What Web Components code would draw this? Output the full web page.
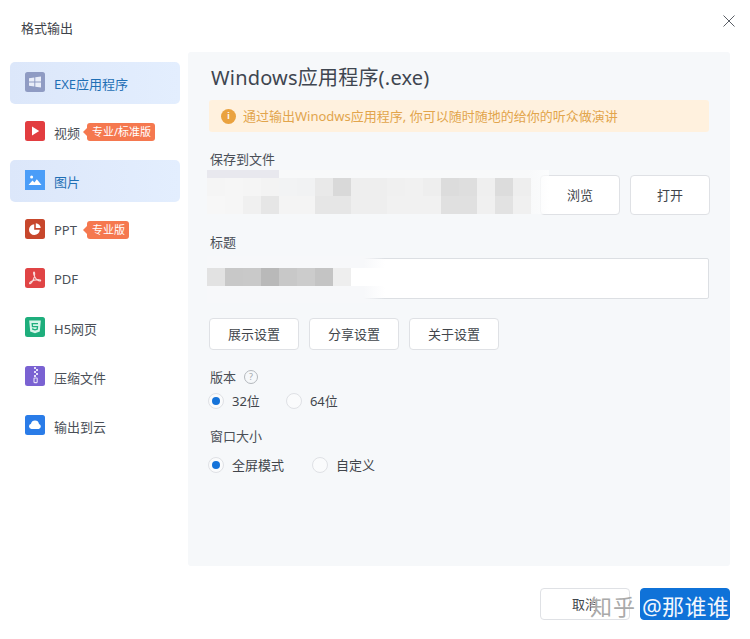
<!DOCTYPE html>
<html lang="zh">
<head>
<meta charset="utf-8">
<title>格式输出</title>
<style>
  html, body { margin: 0; padding: 0; background: #fff; }
  body { font-family: "Noto Sans", "Noto Sans CJK SC", sans-serif; color: #44484f; }
  svg { display: block; }
</style>
</head>
<body>
<format-dialog>
  <span slot="title">格式输出</span>

  <nav-item slot="nav" active>
    <svg slot="icon" width="20" height="20" viewBox="0 0 20 20"><rect width="20" height="20" rx="2.5" fill="#8f9bc3"/><path d="M4 6.2l5.3-.8v4.1H4zM10.3 5.3L16 4.5v5H10.3zM4 10.5h5.3v4.1L4 13.8zM10.3 10.5H16v5l-5.7-.8z" fill="#e9edf8"/></svg>
    EXE应用程序
  </nav-item>
  <nav-item slot="nav" badge="专业/标准版">
    <svg slot="icon" width="20" height="20" viewBox="0 0 20 20"><rect width="20" height="20" rx="2.5" fill="#e23d40"/><path d="M7 5.6l7.2 4.4L7 14.4z" fill="#fff"/></svg>
    视频
  </nav-item>
  <nav-item slot="nav" active>
    <svg slot="icon" width="20" height="20" viewBox="0 0 20 20"><rect width="20" height="20" fill="#4a9df8"/><circle cx="6.6" cy="7" r="1.5" fill="#fff"/><path d="M3.5 15l4-4.4 2 1.8 2.3-3.2 4.7 5.8z" fill="#fff"/></svg>
    图片
  </nav-item>
  <nav-item slot="nav" badge="专业版">
    <svg slot="icon" width="20" height="20" viewBox="0 0 20 20"><rect width="20" height="20" rx="2.5" fill="#c7472c"/><path d="M9.2 5.2a5.4 5.4 0 1 0 5.6 5.6H9.2z" fill="#fff"/><path d="M10.8 4.2v4.9h4.9a5 5 0 0 0-4.9-4.9z" fill="#fff"/></svg>
    PPT
  </nav-item>
  <nav-item slot="nav">
    <svg slot="icon" width="20" height="20" viewBox="0 0 20 20"><rect width="20" height="20" rx="2.5" fill="#e04445"/><path d="M9 4c-.7 0-.6 2.400 1 5.200 1.300 2.300 3.300 3.800 5 3.800 1 0 .9-1.200-.5-1.300-2.600-.3-6.300.4-8.700 2.100-1.400 1-1.500 2.100-.8 2 .9-.1 2.200-1.900 3.500-4.600C9.800 8.400 10 4 9 4z" fill="none" stroke="#f9dcdc" stroke-width="1.100"/></svg>
    PDF
  </nav-item>
  <nav-item slot="nav">
    <svg slot="icon" width="20" height="20" viewBox="0 0 20 20"><rect width="20" height="20" rx="2.500" fill="#1eae7c"/><path d="M4.200 3.600h11.600l-1 11-4.800 1.600-4.800-1.600z" fill="#d8f5ea"/><path d="M13 6.600H7.200l.3 3H12.500l-.3 2.600-2.200.7-2.200-.7-.1-1" fill="none" stroke="#1eae7c" stroke-width="1.300"/></svg>
    H5网页
  </nav-item>
  <nav-item slot="nav">
    <svg slot="icon" width="20" height="20" viewBox="0 0 20 20"><rect width="20" height="20" rx="2.500" fill="#7a62d2"/><path d="M9 1h2v2H9zM11 3h2v2h-2zM9 5h2v2H9zM11 7h2v2h-2zM9 9h2v2H9z" fill="#e5e0f8"/><rect x="9" y="12" width="3.200" height="4.600" rx=".6" fill="none" stroke="#e5e0f8" stroke-width="1.100"/></svg>
    压缩文件
  </nav-item>
  <nav-item slot="nav">
    <svg slot="icon" width="20" height="20" viewBox="0 0 20 20"><rect width="20" height="20" rx="2.500" fill="#2a7ce8"/><path d="M6.500 14a2.700 2.700 0 0 1-.5-5.300 4.100 4.100 0 0 1 8 .2 2.650 2.650 0 0 1-.2 5.100z" fill="#fff"/></svg>
    输出到云
  </nav-item>

  <h1 slot="heading">Windows应用程序(.exe)</h1>
  <info-alert slot="alert">通过输出Winodws应用程序, 你可以随时随地的给你的听众做演讲</info-alert>

  <field-label slot="path-label">保存到文件</field-label>
  <path-row slot="path-row">
    <ui-button w="80" h="40">浏览</ui-button>
    <ui-button w="80" h="40">打开</ui-button>
  </path-row>

  <field-label slot="title-label">标题</field-label>
  <title-input slot="title-input"></title-input>

  <settings-row slot="settings">
    <ui-button w="90" h="32">展示设置</ui-button>
    <ui-button w="90" h="32">分享设置</ui-button>
    <ui-button w="90" h="32">关于设置</ui-button>
  </settings-row>

  <field-label slot="version-label" help>版本</field-label>
  <radio-row slot="version" gap="26">
    <radio-option checked>32位</radio-option>
    <radio-option>64位</radio-option>
  </radio-row>

  <field-label slot="window-label">窗口大小</field-label>
  <radio-row slot="window" gap="28">
    <radio-option checked>全屏模式</radio-option>
    <radio-option>自定义</radio-option>
  </radio-row>

  <ui-button slot="footer" w="90" h="32">取消</ui-button>
  <ui-button slot="footer" w="90" h="32" primary></ui-button>

  <span slot="mark-a">知乎</span>
  <span slot="mark-b">@那谁谁</span>
</format-dialog>

<script>
const FONT = '"Noto Sans", "Noto Sans CJK SC", sans-serif';

class FormatDialog extends HTMLElement {
  constructor() {
    super();
    this.attachShadow({ mode: 'open' });
    this.shadowRoot.innerHTML = `
      <style>
        :host { display: block; position: relative; width: 750px; height: 639px; background: #fff; overflow: hidden; font-family: ${FONT}; }
        header { height: 52px; display: flex; align-items: center; justify-content: space-between; padding: 3px 15px 0 21px; box-sizing: border-box; font-size: 13px; color: #3d4249; }
        .close { margin-top: -14px; }
        .body { display: flex; height: 514px; }
        nav { width: 170px; margin: 0 8px 0 10px; padding-top: 10px; display: flex; flex-direction: column; gap: 7px; }
        main { width: 542px; box-sizing: border-box; background: #f6f8fa; border-radius: 3px; padding: 11px 21px 0 21px; display: flex; flex-direction: column; }
        ::slotted(h1) { margin: 0 0 0 2px; font: 400 20px/30px ${FONT}; letter-spacing: .2px; color: #3f4650; }
        .m7 { margin-top: 7px; } .m17 { margin-top: 17px; } .m6 { margin-top: 6px; } .m19 { margin-top: 19px; } .m4 { margin-top: 4px; } .m15 { margin-top: 15px; } .m9 { margin-top: 9px; }
        footer { display: flex; justify-content: flex-end; gap: 10px; padding: 22px 20px 0 0; }
        .mark { position: absolute; top: 591px; font-size: 22px; line-height: 30px; white-space: nowrap; }
        .a { left: 590px; color: #a9a9a9; text-shadow: 0 0 1px #fff; letter-spacing: 1px; }
        .b { left: 642px; color: #f2f7fd; letter-spacing: .3px; }
      </style>
      <header>
        <div><slot name="title"></slot></div>
        <svg class="close" width="12" height="12" viewBox="0 0 12 12"><path d="M.5.5l11 11M11.500.5l-11 11" stroke="#5b5f66" stroke-width="1" fill="none"/></svg>
      </header>
      <div class="body">
        <nav><slot name="nav"></slot></nav>
        <main>
          <slot name="heading"></slot>
          <div class="m7"><slot name="alert"></slot></div>
          <div class="m17"><slot name="path-label"></slot></div>
          <div class="m6"><slot name="path-row"></slot></div>
          <div class="m17"><slot name="title-label"></slot></div>
          <div class="m6"><slot name="title-input"></slot></div>
          <div class="m19"><slot name="settings"></slot></div>
          <div class="m17"><slot name="version-label"></slot></div>
          <div class="m4"><slot name="version"></slot></div>
          <div class="m15"><slot name="window-label"></slot></div>
          <div class="m9"><slot name="window"></slot></div>
        </main>
      </div>
      <footer><slot name="footer"></slot></footer>
      <div class="mark a"><slot name="mark-a"></slot></div>
      <div class="mark b"><slot name="mark-b"></slot></div>`;
  }
}

class NavItem extends HTMLElement {
  constructor() {
    super();
    this.attachShadow({ mode: 'open' });
  }
  connectedCallback() {
    const badge = this.getAttribute('badge');
    this.shadowRoot.innerHTML = `
      <style>
        :host { display: flex; align-items: center; height: 42px; box-sizing: border-box; padding: 0 0 2px 15px; gap: 9px; border-radius: 5px; font-size: 13px; color: #4a4f57; white-space: nowrap; }
        :host([active]) { background: linear-gradient(90deg, #dce7fa, #e3eefe); color: #1f6fb5; }
        .label { min-width: 26px; margin-top: 2px; }
        .tag { position: relative; margin: 2px 0 0 -2px; height: 18px; padding: 0 4px 0 5px; background: #f5784f; color: #fff; font-size: 11px; line-height: 18px; border-radius: 3px; }
        .tag::before { content: ""; position: absolute; left: -4px; top: 5px; border: 4px solid transparent; border-left: 0; border-right-color: #f5784f; }
      </style>
      <slot name="icon"></slot><span class="label"><slot></slot></span>${badge ? `<span class="tag">${badge}</span>` : ''}`;
  }
}

class InfoAlert extends HTMLElement {
  constructor() {
    super();
    this.attachShadow({ mode: 'open' });
    this.shadowRoot.innerHTML = `
      <style>
        :host { display: flex; align-items: center; height: 32px; width: 500px; gap: 7px; padding: 0 0 2px 12px; box-sizing: border-box; background: #fff1de; border-radius: 3px; color: #e2a54c; font-size: 13px; white-space: nowrap; }
        i { width: 15px; height: 15px; margin-top: 2px; border-radius: 50%; background: #eaa23f; color: #fff; font: 700 9px/15px "Liberation Sans", sans-serif; text-align: center; flex: none; }
      </style>
      <i>i</i><slot></slot>`;
  }
}

class FieldLabel extends HTMLElement {
  constructor() {
    super();
    this.attachShadow({ mode: 'open' });
  }
  connectedCallback() {
    this.shadowRoot.innerHTML = `
      <style>
        :host { display: flex; align-items: center; gap: 8px; height: 20px; box-sizing: border-box; padding-bottom: 2px; font-size: 13px; color: #4a4f57; margin-left: 1px; }
        span { width: 14px; height: 14px; margin-top: 2px; box-sizing: border-box; border: 1px solid #b4b8bd; border-radius: 50%; color: #a4a8ad; font-size: 9px; line-height: 12px; text-align: center; }
      </style>
      <slot></slot>${this.hasAttribute('help') ? '<span>?</span>' : ''}`;
  }
}

class UiButton extends HTMLElement {
  constructor() {
    super();
    this.attachShadow({ mode: 'open' });
  }
  connectedCallback() {
    const w = this.getAttribute('w'), h = this.getAttribute('h');
    this.shadowRoot.innerHTML = `
      <style>
        :host { display: flex; flex: none; align-items: center; justify-content: center; width: ${w}px; height: ${h}px; box-sizing: border-box; padding-bottom: 2px; background: #fff; border: 1px solid #dfe1e5; border-radius: 4px; font-size: 13px; color: #41454b; }
        :host([primary]) { background: #0f72d8; border-color: #0f72d8; color: #fff; }
      </style>
      <slot></slot>`;
  }
}

// row with the file path field, hidden under the mosaic
class PathRow extends HTMLElement {
  constructor() {
    super();
    this.attachShadow({ mode: 'open' });
    this.shadowRoot.innerHTML = `
      <style>
        :host { display: flex; gap: 10px; position: relative; width: 501px; height: 40px; }
        .field { flex: 1; }
        .cover { position: absolute; left: -2px; top: -5px; width: 342px; height: 44px; background: linear-gradient(90deg, #f8f9fa 94%, rgba(255,255,255,.6)); }
        .strip { position: absolute; left: -2px; top: -5px; width: 72px; height: 8px; background: #e8e8ee; }
        .cells { position: absolute; left: -2px; top: 3px; display: flex; flex-direction: column; }
        .r { display: flex; height: 18px; }
        .r i { display: block; width: 18px; }
      </style>
      <div class="field"></div>
      <slot></slot>
      <div class="cover"></div>
      <div class="strip"></div>
      <div class="cells"></div>`;
    const rows = [
      ['#f5f5f5','#f6f6f6','#f5f5f5','#f3f3f3','#f2f3f4','#f1f2f3','#e9e9e9','#d9d9d9','#eeeeee','#eeeeee','#f0f0f0','#f1f1f1','#eeeeee','#dcdcdc','#dedede','#efefef','#dcdcdc','#eeeeee'],
      ['#f7f7f7','#f6f6f6','#f0f0f0','#e6e6e6','#f4f4f4','#f4f4f4','#e6e6e6','#e6e6e6','#eeeeee','#eeeeee','#f1f1f1','#f1f1f1','#f1f1f1','#e0e0e0','#e0e0e0','#f0f0f0','#e2e2e2','#f0f0f0']
    ];
    const cells = this.shadowRoot.querySelector('.cells');
    cells.innerHTML = rows.map(r => `<div class="r">${r.map(c => `<i style="background:${c}"></i>`).join('')}</div>`).join('');
  }
}

class TitleInput extends HTMLElement {
  constructor() {
    super();
    this.attachShadow({ mode: 'open' });
    const cols = ['#e2e2e2','#c8c8c8','#c9c9c9','#b9b9b9','#c8c8c8','#cccccc','#c4c4c4','#eeeeee','#ffffff','#ffffff'];
    this.shadowRoot.innerHTML = `
      <style>
        :host { display: block; position: relative; width: 500px; height: 41px; box-sizing: border-box; background: #fff; border: 1px solid #dcdfe3; border-radius: 2px; }
        .cover { position: absolute; left: -3px; top: -3px; width: 178px; height: 47px; background: linear-gradient(90deg, #f7f8fa 88%, rgba(255,255,255,0)); }
        .cells { position: absolute; left: -3px; top: 9px; display: flex; }
        .cells i { display: block; width: 18px; height: 18px; }
      </style>
      <div class="cover"></div>
      <div class="cells">${cols.map(c => `<i style="background:${c}"></i>`).join('')}</div>`;
  }
}

class SettingsRow extends HTMLElement {
  constructor() {
    super();
    this.attachShadow({ mode: 'open' });
    this.shadowRoot.innerHTML = `
      <style>:host { display: flex; gap: 10px; }</style>
      <slot></slot>`;
  }
}

class RadioRow extends HTMLElement {
  constructor() {
    super();
    this.attachShadow({ mode: 'open' });
  }
  connectedCallback() {
    this.shadowRoot.innerHTML = `
      <style>:host { display: flex; gap: ${this.getAttribute('gap')}px; height: 20px; align-items: center; margin-left: -1px; }</style>
      <slot></slot>`;
  }
}

class RadioOption extends HTMLElement {
  constructor() {
    super();
    this.attachShadow({ mode: 'open' });
    this.shadowRoot.innerHTML = `
      <style>
        :host { display: flex; align-items: center; gap: 8px; padding-bottom: 2px; font-size: 13px; color: #41454b; white-space: nowrap; }
        i { display: block; width: 16px; height: 16px; margin-top: 2px; box-sizing: border-box; border: 1px solid #dfe1e5; border-radius: 50%; background: #fafbfc; position: relative; }
        :host([checked]) i::after { content: ""; position: absolute; left: 3px; top: 3px; width: 8px; height: 8px; border-radius: 50%; background: #1573d9; }
      </style>
      <i></i><slot></slot>`;
  }
}

customElements.define('format-dialog', FormatDialog);
customElements.define('nav-item', NavItem);
customElements.define('info-alert', InfoAlert);
customElements.define('field-label', FieldLabel);
customElements.define('ui-button', UiButton);
customElements.define('path-row', PathRow);
customElements.define('title-input', TitleInput);
customElements.define('settings-row', SettingsRow);
customElements.define('radio-row', RadioRow);
customElements.define('radio-option', RadioOption);
</script>
</body>
</html>
